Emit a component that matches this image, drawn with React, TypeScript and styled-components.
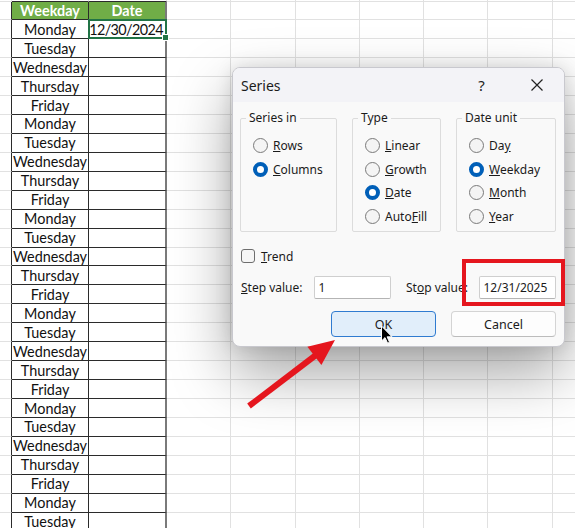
import React from 'react'
import styled, { createGlobalStyle, css } from 'styled-components'

const GlobalStyle = createGlobalStyle`
  html, body {
    margin: 0;
    padding: 0;
    background: #fff;
  }
`

const Page = styled.div`
  position: relative;
  width: 575px;
  height: 528px;
  overflow: hidden;
  background: #fff;
`

// spreadsheet behind the dialog
const Sheet = styled.div`
  display: grid;
  grid-template-columns: 12px 77px 78px repeat(7, 64.3px);
  grid-template-rows: 2px 18.3px repeat(27, 18.94px);
  font-family: Lato, 'Liberation Sans', sans-serif;
  font-size: 14.4px;
  color: #111;
`

type Kind = 'grid' | 'edge' | 'cap' | 'head' | 'headLast' | 'day' | 'date'

const dark = '#2b2b2b'

const kinds: Record<Kind, ReturnType<typeof css>> = {
  grid: css``,
  edge: css`
    border-right-color: ${dark};
  `,
  cap: css`
    border-bottom-color: ${dark};
  `,
  head: css`
    background: #70ad47;
    color: #fff;
    font-weight: 700;
    border-right-color: ${dark};
    border-bottom-color: ${dark};
  `,
  headLast: css`
    background: #70ad47;
    color: #fff;
    font-weight: 700;
    border-right: 2px solid #7a7a7a;
    border-bottom-color: ${dark};
  `,
  day: css`
    border-right-color: ${dark};
    border-bottom-color: ${dark};
  `,
  date: css`
    border-right: 2px solid #7a7a7a;
    border-bottom-color: ${dark};
    justify-content: flex-end;
    padding-right: 2px;
    letter-spacing: -0.6px;
  `,
}

const Cell = styled.div<{ $kind: Kind; $selected?: boolean }>`
  box-sizing: border-box;
  position: relative;
  display: flex;
  align-items: center;
  justify-content: center;
  white-space: nowrap;
  border-right: 1px solid #e1e1e1;
  border-bottom: 1px solid #e1e1e1;
  ${({ $kind }) => kinds[$kind]}

  ${({ $selected }) =>
    $selected &&
    css`
      &::after {
        content: '';
        position: absolute;
        left: -1px;
        top: -1px;
        right: -2px;
        bottom: -1px;
        border: 2px solid #217346;
      }
      &::before {
        content: '';
        position: absolute;
        right: -4px;
        bottom: -3px;
        width: 5px;
        height: 5px;
        background: #217346;
        border: 1px solid #fff;
        z-index: 1;
      }
    `}
`

// dialog
const Dialog = styled.div`
  position: absolute;
  left: 232px;
  top: 67px;
  width: 333px;
  height: 280px;
  box-sizing: border-box;
  display: flex;
  flex-direction: column;
  border: 1px solid #c8c8ce;
  border-radius: 8px;
  overflow: hidden;
  background: #f9f9f9;
  box-shadow: 0 26px 60px rgba(0, 0, 0, 0.36), 0 0 18px rgba(0, 0, 0, 0.12);
  font-family: 'Segoe UI', 'Noto Sans', 'Open Sans', sans-serif;
  font-size: 12px;
  color: #1b1b1b;
`

const TitleBar = styled.div`
  display: flex;
  align-items: center;
  height: 34px;
  padding-left: 8px;
  background: #f3f3f7;
`

const Title = styled.div`
  flex: 1;
  font-size: 14px;
`

const TitleButton = styled.div`
  width: 55px;
  height: 34px;
  display: flex;
  align-items: center;
  justify-content: center;
  font-size: 15px;
  color: #222;
`

const Body = styled.div`
  display: flex;
  flex-direction: column;
  padding: 0 8px 0 7px;
`

const GroupRow = styled.div`
  display: flex;
  gap: 15px;
  height: 122px;
  margin-top: 8px;
`

const Group = styled.fieldset<{ $w: number }>`
  width: ${({ $w }) => $w}px;
  box-sizing: border-box;
  margin: 0;
  padding: 0;
  min-width: 0;
  border: 1px solid #dcdcdc;
  border-radius: 2px;
`

const Legend = styled.legend`
  margin-left: 5px;
  padding: 0 3px;
  line-height: 16px;
  font-size: 12px;
`

const Options = styled.div`
  display: flex;
  flex-direction: column;
  padding: 8px 0 0 12px;
`

const Option = styled.div`
  display: flex;
  align-items: center;
  gap: 5px;
  height: 23.6px;
  font-size: 12px;
`

const Radio = styled.span<{ $on?: boolean }>`
  box-sizing: border-box;
  width: 15px;
  height: 15px;
  border-radius: 50%;
  flex: none;
  border: 1px solid #7a7a7a;
  background: #f4f4f4;
  ${({ $on }) =>
    $on &&
    css`
      border: 4.5px solid #005fb8;
      background: #fff;
    `}
`

const TrendRow = styled.div`
  display: flex;
  align-items: center;
  gap: 6px;
  height: 14px;
  margin-top: 17px;
  padding-left: 1px;
  font-size: 12px;
`

const CheckBox = styled.span`
  box-sizing: border-box;
  width: 14px;
  height: 14px;
  border: 1px solid #6e6e6e;
  border-radius: 3px;
  background: #f6f6f6;
`

const StepRow = styled.div`
  display: flex;
  align-items: center;
  height: 23px;
  margin-top: 13px;
  font-size: 12px;
`

const FieldLabel = styled.div<{ $gap?: number }>`
  width: 73px;
  margin-left: ${({ $gap }) => $gap ?? 0}px;
  white-space: nowrap;
  padding-left: 1px;
`

const Field = styled.div`
  box-sizing: border-box;
  width: 78px;
  height: 23px;
  display: flex;
  align-items: center;
  padding-left: 4px;
  background: #fff;
  border: 1px solid #cfcfcf;
  border-bottom-color: #b4b4b4;
  border-radius: 2px;
`

const ButtonRow = styled.div`
  display: flex;
  justify-content: flex-end;
  gap: 15px;
  margin-top: 12px;
`

const Button = styled.div<{ $primary?: boolean }>`
  box-sizing: border-box;
  width: 105px;
  height: 26px;
  display: flex;
  align-items: center;
  justify-content: center;
  border-radius: 4px;
  font-size: 12.5px;
  background: #fdfdfd;
  border: 1px solid #d4d4d4;
  border-bottom-color: #bcbcbc;
  ${({ $primary }) =>
    $primary &&
    css`
      background: #e1eefa;
      border: 1.5px solid #2f7bd0;
    `}
`

// annotations on top of the screenshot
const Highlight = styled.div`
  position: absolute;
  left: 462px;
  top: 259px;
  width: 103px;
  height: 47px;
  box-sizing: border-box;
  border: 4px solid #e5161e;
`

const Overlay = styled.svg`
  position: absolute;
  left: 0;
  top: 0;
  pointer-events: none;
`

const days = ['Monday', 'Tuesday', 'Wednesday', 'Thursday', 'Friday']

function Blank({ n, kind = 'grid' }: { n: number; kind?: Kind }) {
  return (
    <>
      {Array.from({ length: n }, (_, i) => (
        <Cell key={i} $kind={kind} />
      ))}
    </>
  )
}

export default function App() {
  return (
    <>
      <GlobalStyle />
      <Page>
        <Sheet>
          <Cell $kind="grid" />
          <Cell $kind="cap" />
          <Cell $kind="cap" />
          <Blank n={7} />

          <Cell $kind="edge" />
          <Cell $kind="head">Weekday</Cell>
          <Cell $kind="headLast">Date</Cell>
          <Blank n={7} />

          {Array.from({ length: 27 }, (_, i) => (
            <React.Fragment key={i}>
              <Cell $kind="edge" />
              <Cell $kind="day">{days[i % 5]}</Cell>
              <Cell $kind="date" $selected={i === 0}>
                {i === 0 ? '12/30/2024' : ''}
              </Cell>
              <Blank n={7} />
            </React.Fragment>
          ))}
        </Sheet>

        <Dialog>
          <TitleBar>
            <Title>Series</Title>
            <TitleButton>?</TitleButton>
            <TitleButton>
              <svg width="12" height="12" viewBox="0 0 12 12">
                <path d="M0.5 0.5 L11.5 11.5 M11.5 0.5 L0.5 11.5" stroke="#222" strokeWidth="1.2" />
              </svg>
            </TitleButton>
          </TitleBar>

          <Body>
            <GroupRow>
              <Group $w={97}>
                <Legend>Series in</Legend>
                <Options>
                  <Option>
                    <Radio />
                    <span>
                      <u>R</u>ows
                    </span>
                  </Option>
                  <Option>
                    <Radio $on />
                    <span>
                      <u>C</u>olumns
                    </span>
                  </Option>
                </Options>
              </Group>

              <Group $w={89}>
                <Legend>Type</Legend>
                <Options>
                  <Option>
                    <Radio />
                    <span>
                      <u>L</u>inear
                    </span>
                  </Option>
                  <Option>
                    <Radio />
                    <span>
                      <u>G</u>rowth
                    </span>
                  </Option>
                  <Option>
                    <Radio $on />
                    <span>
                      <u>D</u>ate
                    </span>
                  </Option>
                  <Option>
                    <Radio />
                    <span>
                      Auto<u>F</u>ill
                    </span>
                  </Option>
                </Options>
              </Group>

              <Group $w={100}>
                <Legend>Date unit</Legend>
                <Options>
                  <Option>
                    <Radio />
                    <span>
                      Da<u>y</u>
                    </span>
                  </Option>
                  <Option>
                    <Radio $on />
                    <span>
                      <u>W</u>eekday
                    </span>
                  </Option>
                  <Option>
                    <Radio />
                    <span>
                      <u>M</u>onth
                    </span>
                  </Option>
                  <Option>
                    <Radio />
                    <span>
                      <u>Y</u>ear
                    </span>
                  </Option>
                </Options>
              </Group>
            </GroupRow>

            <TrendRow>
              <CheckBox />
              <span>
                <u>T</u>rend
              </span>
            </TrendRow>

            <StepRow>
              <FieldLabel>
                <u>S</u>tep value:
              </FieldLabel>
              <Field>1</Field>
              <FieldLabel $gap={14}>
                St<u>o</u>p value:
              </FieldLabel>
              <Field>12/31/2025</Field>
            </StepRow>

            <ButtonRow>
              <Button $primary>OK</Button>
              <Button>Cancel</Button>
            </ButtonRow>
          </Body>
        </Dialog>

        <Highlight />

        <Overlay width="575" height="528" viewBox="0 0 575 528">
          <line x1="249" y1="406" x2="316" y2="355" stroke="#e5161e" strokeWidth="6" />
          <polygon points="335,340 307.4,346.8 321.4,365" fill="#e5161e" />
          <path
            d="M381.5 326 L381.5 341 L385 337.6 L387.6 343.2 L389.6 342.3 L387.1 336.8 L392 336.8 Z"
            fill="#000"
            stroke="#fff"
            strokeWidth="1"
            strokeLinejoin="round"
          />
        </Overlay>
      </Page>
    </>
  )
}
